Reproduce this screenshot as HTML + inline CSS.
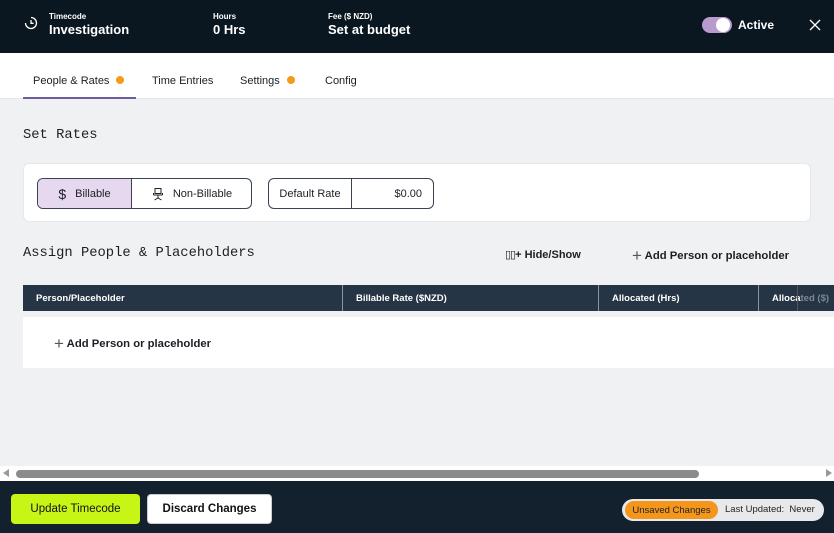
<!DOCTYPE html>
<html><head><style>
*{box-sizing:border-box;margin:0;padding:0}
body{width:834px;height:533px;overflow:hidden;background:#f0f1f3;font-family:"Liberation Sans",sans-serif;position:relative;color:#1b1f24}
.hdr{position:absolute;left:0;top:0;width:834px;height:53px;background:#0a1720;color:#fff}
.lbl{position:absolute;font-size:8px;font-weight:bold}
.val{position:absolute;font-size:13px;font-weight:bold}
.tabs{position:absolute;top:53px;left:0;width:834px;height:46px;background:#fff;border-bottom:1px solid #e2e4e7}
.tab{position:absolute;top:22px;font-size:11px}
.dot{display:inline-block;width:8px;height:8px;border-radius:50%;background:#f59b1c;margin-left:7px;vertical-align:0}
.mono{font-family:"Liberation Mono",monospace;font-size:13.8px;position:absolute}
.card{position:absolute;left:23px;top:163px;width:788px;height:59px;background:#fff;border:1px solid #e6e8eb;border-radius:6px}
.seg{position:absolute;top:178px;height:31px;border:1px solid #3a4350;border-radius:6px;overflow:hidden;display:flex;font-size:11px}
.seg div{display:flex;align-items:center;justify-content:center;height:100%}
.th{position:absolute;top:285px;left:23px;width:811px;height:26px;background:#253545;color:#fff;font-size:9.5px;font-weight:bold;white-space:nowrap;overflow:hidden}
.th>span{position:absolute;top:8px}
.th i{position:absolute;top:0;width:1px;height:26px;background:#8a96a3}
.foot{position:absolute;left:0;top:481px;width:834px;height:52px;background:#13202d}
.btn{position:absolute;top:494px;height:30px;border-radius:4px;font-size:11.5px;font-weight:bold;display:flex;align-items:center;justify-content:center}
</style></head><body>
<div class="hdr">
<svg style="position:absolute;left:24px;top:16px" width="14" height="14" viewBox="0 0 14 14"><path d="M7 1.5A5.5 5.5 0 1 1 1.5 7" fill="none" stroke="#fff" stroke-width="1.3"/><path d="M7 4v3.3h2.6" fill="none" stroke="#fff" stroke-width="1.3"/></svg>
<div class="lbl" style="left:49px;top:12px">Timecode</div><div class="val" style="left:49px;top:22px">Investigation</div>
<div class="lbl" style="left:213px;top:12px">Hours</div><div class="val" style="left:213px;top:22px">0 Hrs</div>
<div class="lbl" style="left:328px;top:12px">Fee ($ NZD)</div><div class="val" style="left:328px;top:22px">Set at budget</div>
<div style="position:absolute;left:702px;top:17px;width:30px;height:16px;border-radius:8px;background:#b89bcc"></div>
<div style="position:absolute;left:716px;top:18px;width:14px;height:14px;border-radius:50%;background:#fff"></div>
<div class="val" style="left:738px;top:18px;font-size:12px">Active</div>
<svg style="position:absolute;left:809px;top:19px" width="12" height="12"><path d="M1 1L11 11M11 1L1 11" stroke="#fff" stroke-width="1.3"/></svg>
</div>
<div class="tabs">
<div class="tab" style="left:33px">People &amp; Rates<span class="dot"></span></div>
<div style="position:absolute;left:23px;top:44px;width:113px;height:2px;background:#6f5c9e"></div>
<div class="tab" style="left:152px">Time Entries</div>
<div class="tab" style="left:240px">Settings<span class="dot"></span></div>
<div class="tab" style="left:325px">Config</div>
</div>
<div class="mono" style="left:23px;top:128px">Set Rates</div>
<div class="card"></div>
<div class="seg" style="left:37px;width:215px">
<div style="width:94px;background:#e6d9ef;border-right:1px solid #3a4350"><span style="font-size:14px;margin-right:9px">$</span>Billable</div>
<div style="flex:1"><svg width="14" height="14" viewBox="0 0 14 14" style="margin-right:8px"><path d="M4 1.5h6v5H4z M2.5 8h9 M7 8v3 M3.5 13l3.5-2 3.5 2 M2.5 6v2 M11.5 6v2" fill="none" stroke="#222" stroke-width="1"/></svg>Non-Billable</div>
</div>
<div class="seg" style="left:268px;width:166px">
<div style="width:83px;border-right:1px solid #3a4350">Default Rate</div>
<div style="flex:1;justify-content:flex-end;padding-right:11px">$0.00</div>
</div>
<div class="mono" style="left:23px;top:246px">Assign People &amp; Placeholders</div>
<div style="position:absolute;left:505px;top:248px;font-size:11px;font-weight:bold"><span style="font-weight:normal;letter-spacing:-1px">▯▯</span>+ Hide/Show</div>
<div style="position:absolute;left:632px;top:246px;font-size:11.3px;font-weight:bold"><span style="font-size:17px;font-weight:normal;color:#555;vertical-align:-2px">+</span> Add Person or placeholder</div>
<div class="th"><span style="left:13px">Person/Placeholder</span><i style="left:319px"></i><span style="left:333px">Billable Rate ($NZD)</span><i style="left:575px"></i><span style="left:589px">Allocated (Hrs)</span><i style="left:735px"></i><span style="left:749px">Alloca<b style="opacity:.4">ted ($)</b></span><i style="left:774px;background:#555"></i></div>
<div style="position:absolute;left:23px;top:317px;width:811px;height:51px;background:#fff"></div>
<div style="position:absolute;left:54px;top:334px;font-size:11.3px;font-weight:bold"><span style="font-size:17px;font-weight:normal;color:#555;vertical-align:-2px">+</span> Add Person or placeholder</div>
<div style="position:absolute;left:0;top:466px;width:834px;height:15px;background:#fff"></div>
<div style="position:absolute;left:16px;top:470px;width:683px;height:8px;border-radius:4px;background:#8b8b8b"></div>
<div style="position:absolute;left:3px;top:469px;width:0;height:0;border-top:4px solid transparent;border-bottom:4px solid transparent;border-right:6px solid #999"></div>
<div style="position:absolute;left:826px;top:469px;width:0;height:0;border-top:4px solid transparent;border-bottom:4px solid transparent;border-left:6px solid #999"></div>
<div class="foot"></div>
<div class="btn" style="left:11px;width:129px;background:#c6f516;color:#111;font-weight:normal">Update Timecode</div>
<div class="btn" style="left:147px;width:125px;background:#fff;border:1px solid #ccc;color:#111">Discard Changes</div>
<div style="position:absolute;left:622px;top:499px;width:202px;height:22px;border-radius:11px;background:#e8e9eb"></div>
<div style="position:absolute;left:625px;top:501px;width:93px;height:18px;border-radius:9px;background:#f5961c;font-size:9.5px;display:flex;align-items:center;justify-content:center;color:#222">Unsaved Changes</div>
<div style="position:absolute;left:725px;top:504px;font-size:9.5px;color:#222">Last Updated:&nbsp;&nbsp;Never</div>
</body></html>
